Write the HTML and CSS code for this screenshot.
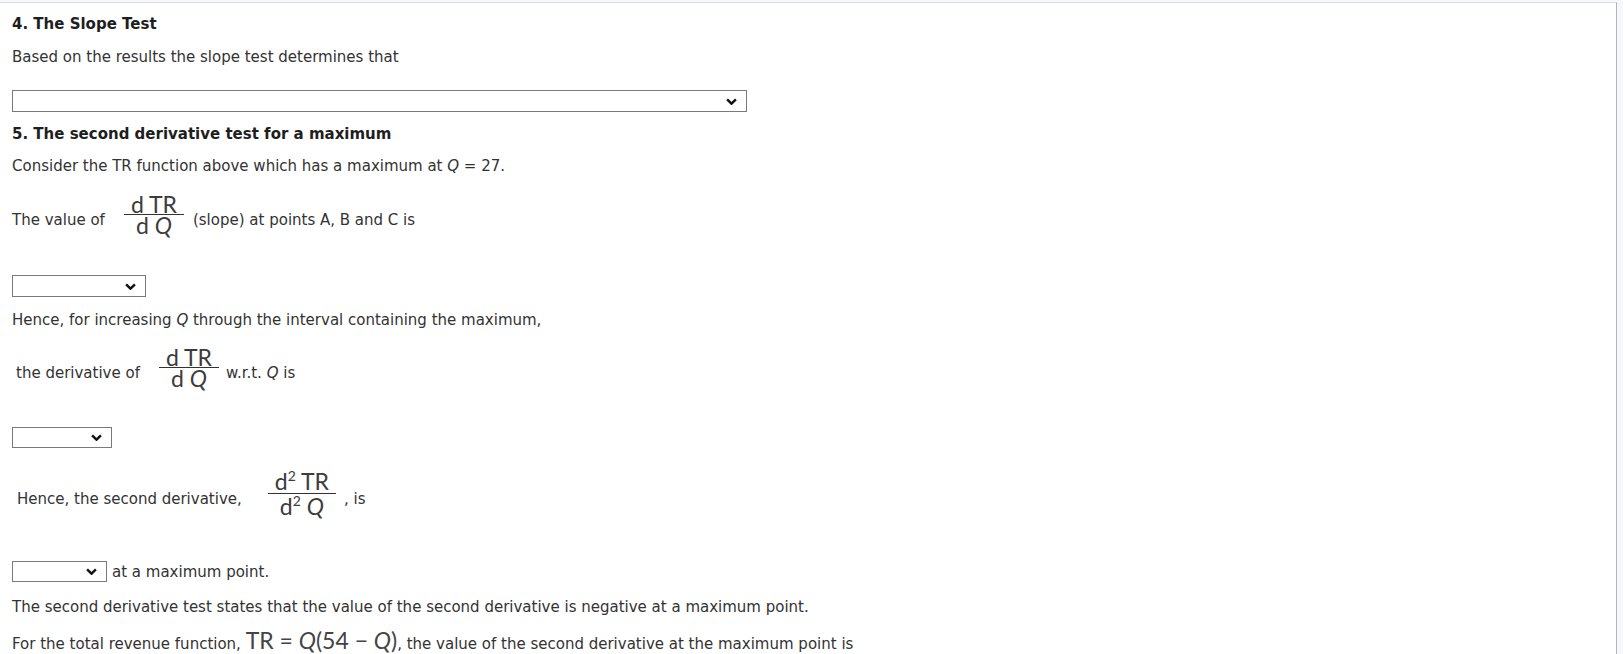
FILE: index.html
```html
<!DOCTYPE html>
<html lang="en">
<head>
    <meta charset="UTF-8">
    <title>The Slope Test</title>
    <link rel="stylesheet" href="styles.css">
</head>
<body>
    <div class="page">
        <h4 class="q-title">4. The Slope Test</h4>
        <p class="line first">Based on the results the slope test determines that</p>
        <div class="dd dd-wide"><select></select><svg viewBox="0 0 10 6"><path d="M1 1 L5 5 L9 1"/></svg></div>

        <h4 class="q-title second">5. The second derivative test for a maximum</h4>
        <p class="line">Consider the TR function above which has a maximum at <i>Q</i> = 27.</p>

        <div class="frac-row row-1">
            <span class="label">The value of</span>
            <span class="frac">
                <span class="num">d TR</span>
                <span class="den">d <i>Q</i></span>
            </span>
            <span class="label">(slope) at points A, B and C is</span>
        </div>
        <div class="dd dd-md row-sel-1"><select></select><svg viewBox="0 0 10 6"><path d="M1 1 L5 5 L9 1"/></svg></div>

        <p class="line hence">Hence, for increasing <i>Q</i> through the interval containing the maximum,</p>

        <div class="frac-row row-2">
            <span class="label">the derivative of</span>
            <span class="frac">
                <span class="num">d TR</span>
                <span class="den">d <i>Q</i></span>
            </span>
            <span class="label">w.r.t. <i>Q</i> is</span>
        </div>
        <div class="dd dd-sm row-sel-2"><select></select><svg viewBox="0 0 10 6"><path d="M1 1 L5 5 L9 1"/></svg></div>

        <div class="frac-row row-3">
            <span class="label">Hence, the second derivative,</span>
            <span class="frac big">
                <span class="num">d<sup>2</sup> TR</span>
                <span class="den">d<sup>2</sup> <i>Q</i></span>
            </span>
            <span class="label">, is</span>
        </div>

        <div class="sel-row">
            <div class="dd dd-xs"><select></select><svg viewBox="0 0 10 6"><path d="M1 1 L5 5 L9 1"/></svg></div>
            <span>at a maximum point.</span>
        </div>

        <p class="line states">The second derivative test states that the value of the second derivative is negative at a maximum point.</p>
        <p class="line last">For the total revenue function, <span class="math">TR = <i>Q</i>(54 &minus; <i>Q</i>)</span>, the value of the second derivative at the maximum point is</p>
    </div>
</body>
</html>
```

FILE: styles.css
```css
body {
    margin: 0;
    background-color: #f5f7fb;
    font-family: Verdana, 'DejaVu Sans', sans-serif;
    font-size: 15px;
    color: #333;
}

.page {
    width: 1604px;
    height: 652px;
    margin-top: 2px;
    padding: 0 0 0 12px;
    background-color: #fff;
    border-top: 1px solid #d6dce6;
    border-right: 1px solid #b4b4b4;
    overflow: hidden;
}

.q-title {
    margin: 12px 0 0 0;
    font-size: 15px;
    line-height: 18px;
    color: #1e1e1e;
}

.q-title.second {
    margin-top: 13px;
}

.line {
    margin: 14px 0 0 0;
    line-height: 18px;
}

.line.first {
    margin-top: 15px;
}

.line.states {
    margin-top: 16px;
}

.line.last {
    margin-top: 14px;
    line-height: 20px;
}

.math {
    font-family: Lato, 'Open Sans', sans-serif;
    font-size: 23px;
    line-height: 20px;
    color: #444;
}

/* dropdowns */
.dd {
    position: relative;
    height: 22px;
    box-sizing: border-box;
    border: 1px solid #7a7a7a;
    background-color: #fff;
}

.dd select {
    appearance: none;
    -webkit-appearance: none;
    border: 0;
    background: transparent;
    width: 100%;
    height: 100%;
    margin: 0;
    padding: 0;
}

.dd svg {
    position: absolute;
    right: 9px;
    top: 7px;
    width: 11px;
    height: 7px;
    fill: none;
    stroke: #111;
    stroke-width: 2.2;
}

.dd-wide {
    width: 735px;
    margin-top: 24px;
}

.dd-md {
    width: 134px;
}

.dd-sm {
    width: 100px;
    height: 21px;
}

.dd-xs {
    width: 95px;
    height: 21px;
}

.dd-sm svg,
.dd-xs svg {
    top: 6px;
}

.row-sel-1 {
    margin-top: 40px;
}

.row-sel-2 {
    margin-top: 39px;
}

/* fractions */
.frac-row {
    display: flex;
    align-items: center;
}

.frac-row .label {
    margin-top: 10px;
}

.row-1 {
    margin-top: 19px;
}

.row-2 {
    margin-top: 18px;
    padding-left: 4px;
}

.row-3 {
    margin-top: 21px;
    padding-left: 5px;
}

.frac {
    display: inline-flex;
    flex-direction: column;
    align-items: center;
    font-family: Lato, 'Open Sans', sans-serif;
    font-size: 23px;
    color: #3c3c3c;
    margin: 0 9px 0 19px;
}

.row-2 .frac {
    margin-right: 7px;
}

.frac .num {
    line-height: 20px;
    padding: 0 7px;
    border-bottom: 1px solid #333;
}

.frac .den {
    line-height: 20px;
    padding: 0 7px;
}

.frac.big {
    margin-left: 26px;
    margin-right: 8px;
}

.frac.big .num,
.frac.big .den {
    line-height: 24px;
    padding: 0 7px;
}

.frac sup {
    font-size: 14px;
    line-height: 0;
    vertical-align: 9px;
}

.sel-row {
    display: flex;
    align-items: center;
    gap: 5px;
    margin-top: 43px;
}
```
